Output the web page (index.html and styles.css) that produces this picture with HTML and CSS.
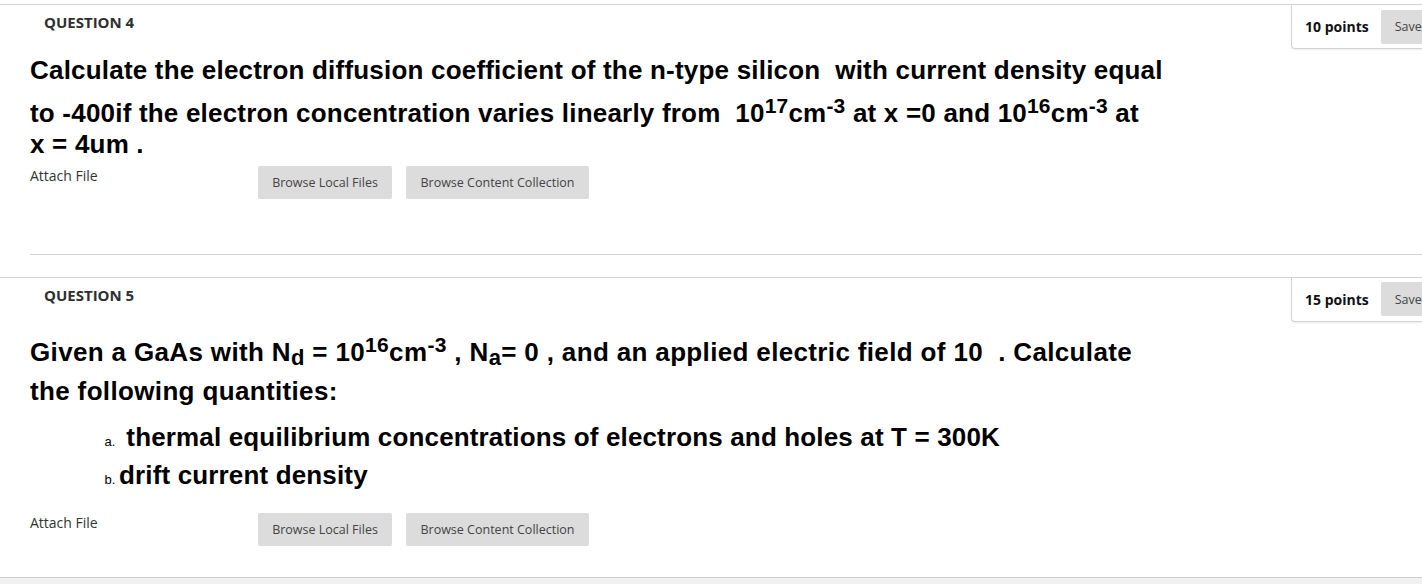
FILE: index.html
```html
<!DOCTYPE html>
<html>
<head>
<meta charset="utf-8">
<link rel="stylesheet" href="styles.css">
</head>
<body>
<div class="page">
  <section class="question q4">
    <div class="q-head">
      <h3 class="q-title">QUESTION 4</h3>
      <div class="points-box">
        <span class="points">10 points</span>
        <button class="save">Save</button>
      </div>
    </div>
    <div class="q-body">
      <p class="prompt p4">Calculate the electron diffusion coefficient of the n-type silicon&nbsp; with current density equal to -400if the electron concentration varies linearly from&nbsp; 10<sup>17</sup>cm<sup>-3</sup> at x =0 and 10<sup>16</sup>cm<sup>-3</sup> at x&nbsp;=&nbsp;4um .</p>
      <div class="attach">
        <span class="attach-label">Attach File</span>
        <button class="btn btn-local">Browse Local Files</button>
        <button class="btn btn-content">Browse Content Collection</button>
      </div>
    </div>
    <div class="sep"></div>
  </section>
  <section class="question q5">
    <div class="q-head">
      <h3 class="q-title">QUESTION 5</h3>
      <div class="points-box">
        <span class="points">15 points</span>
        <button class="save">Save</button>
      </div>
    </div>
    <div class="q-body">
      <p class="prompt p5">Given a GaAs with N<sub>d</sub> = 10<sup>16</sup>cm<sup>-3</sup> , N<sub>a</sub>= 0 , and an applied electric field of 10&nbsp; . Calculate the following quantities:</p>
      <ol class="parts">
        <li><span class="part-text">&nbsp;thermal equilibrium concentrations of electrons and holes at T = 300K</span></li>
        <li><span class="part-text">drift current density</span></li>
      </ol>
      <div class="attach">
        <span class="attach-label">Attach File</span>
        <button class="btn btn-local">Browse Local Files</button>
        <button class="btn btn-content">Browse Content Collection</button>
      </div>
    </div>
  </section>
  <div class="next"></div>
</div>
</body>
</html>
```
FILE: styles.css
```css
html, body {
  margin: 0;
  padding: 0;
  background: #fff;
}
body {
  font-family: "Open Sans", "Liberation Sans", sans-serif;
  color: #333;
  overflow: hidden;
}
.page {
  width: 1422px;
  padding-top: 4px;
}
.question {
  border-top: 1px solid #d2d2d2;
}
.q-head {
  display: flex;
  justify-content: space-between;
  align-items: flex-start;
}
.q-title {
  margin: 0;
  padding: 8px 0 0 44px;
  font-size: 15px;
  line-height: 19px;
  font-weight: 700;
  color: #2f2f2f;
}
.points-box {
  display: flex;
  align-items: center;
  gap: 12px;
  height: 44px;
  padding-left: 13px;
  border-left: 1px solid #d4d4d4;
  border-bottom: 1px solid #d4d4d4;
  border-bottom-left-radius: 4px;
  box-shadow: 0 1px 2px rgba(0,0,0,0.08);
  box-sizing: border-box;
  width: 131px;
  overflow: hidden;
}
.points {
  font-size: 14px;
  font-weight: 700;
  color: #111;
  white-space: nowrap;
}
.save {
  flex: none;
  width: 60px;
  height: 34px;
  border: none;
  border-radius: 2px 0 0 2px;
  background: #dcdcdc;
  font-family: "Open Sans", sans-serif;
  font-size: 12.5px;
  color: #444;
  text-align: left;
  padding: 0 0 0 14px;
}
.q-body {
  padding-left: 30px;
}
.prompt {
  margin: 6px 0 0 0;
  font-family: "Liberation Sans", Arial, sans-serif;
  font-weight: 700;
  font-size: 26px;
  line-height: 31px;
  color: #000;
}
.p4 {
  width: 1160px;
  letter-spacing: 0.2px;
}
.p5 {
  width: 1140px;
  margin-top: 3px;
  letter-spacing: 0.35px;
}
.prompt sup {
  font-size: 21px;
  line-height: 39px;
  vertical-align: 8.5px;
}
.prompt sub {
  font-size: 22px;
  line-height: 38px;
  vertical-align: -4px;
}
.attach {
  display: flex;
  align-items: flex-start;
  margin-top: 6px;
}
.attach-label {
  width: 228px;
  font-size: 14px;
  line-height: 18px;
  color: #333;
  padding-top: 1px;
}
.btn {
  height: 33px;
  margin: 0 14px 0 0;
  padding: 0;
  border: none;
  border-radius: 2px;
  background: #dcdcdc;
  font-family: "Open Sans", sans-serif;
  font-size: 12.5px;
  color: #444;
  text-align: center;
}
.btn-local {
  width: 134px;
}
.btn-content {
  width: 183px;
}
.sep {
  margin: 55px 0 0 30px;
  border-top: 1px solid #d4d4d4;
  height: 22px;
}
.parts {
  list-style: lower-alpha;
  margin: 16px 0 0 0;
  padding-left: 89px;
  font-family: "Liberation Sans", Arial, sans-serif;
  font-size: 13px;
  color: #000;
}
.parts li {
  line-height: 38px;
}
.part-text {
  font-size: 26px;
  line-height: 29px;
  letter-spacing: 0.15px;
  font-weight: 700;
}
.q5 .attach {
  margin-top: 14px;
}
.next {
  margin-top: 31px;
  border-top: 1px solid #cfcfcf;
  height: 20px;
  background: #f1f1f1;
}
```
